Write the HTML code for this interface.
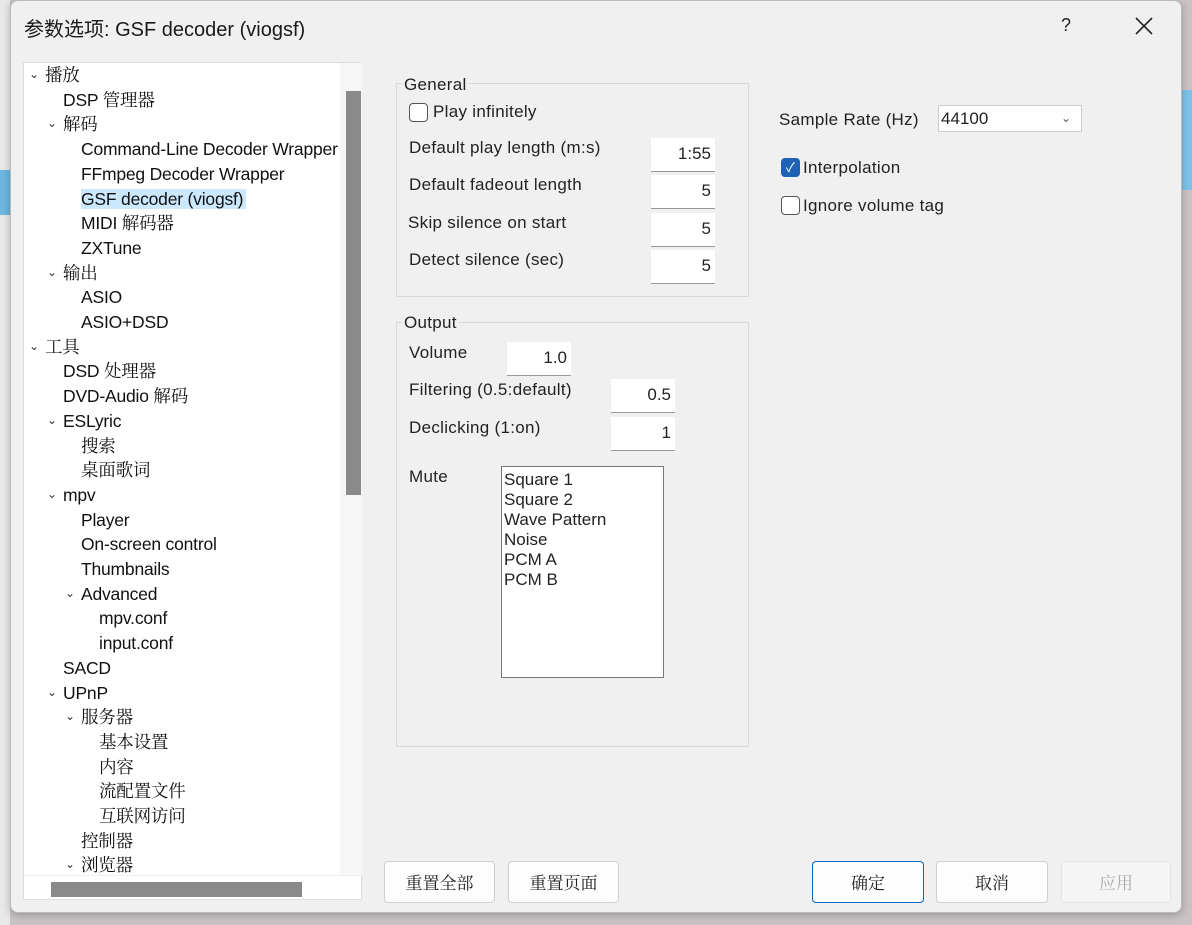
<!DOCTYPE html>
<html><head><meta charset="utf-8"><style>
*{box-sizing:border-box;margin:0;padding:0}
body{width:1192px;height:925px;overflow:hidden;background:#c9c3c6;font-family:"Liberation Sans","Noto Sans CJK SC",sans-serif;position:relative}
.a{position:absolute}
#win{left:10px;top:0;width:1172px;height:913px;background:#f0f0f0;border:1px solid #bbb;border-radius:8px;overflow:hidden;box-shadow:0 2px 8px rgba(0,0,0,.25)}
.title{left:13px;top:12px;font-size:20px;color:#1a1a1a}
.tree{left:12px;top:61px;width:339px;height:838px;background:#fff;border:1px solid #ddd}
.ti{position:absolute;font-size:17.5px;color:#111;white-space:nowrap;line-height:24px;height:24px;letter-spacing:-0.2px}
.cn{font-family:"Liberation Sans","Noto Serif CJK SC","Noto Serif CJK JP",serif}
.sel{background:#cce8ff;padding:0 3px;margin-left:-3px}
.chev{position:absolute;font-size:12px;color:#333}
.lbl{font-size:17px;color:#222;white-space:nowrap;letter-spacing:.3px}
.ed{background:#fff;border-bottom:1px solid #999;text-align:right;font-size:17px;padding-right:4px;line-height:32px;height:34px;color:#222}
.grp{border:1px solid #d8d8d8}
.btn{background:#fdfdfd;border:1px solid #d0d0d0;border-radius:4px;font-size:17px;text-align:center;line-height:40px;font-family:"Noto Serif CJK SC",serif;color:#222}
.cb{width:19px;height:19px;border:1px solid #555;border-radius:4px;background:#fff}
</style></head><body>
<div class="a" style="left:0;top:0;width:10px;height:925px;background:#e8e8e8"></div>
<div class="a" style="left:0;top:170px;width:10px;height:45px;background:#6cb6e0"></div>
<div class="a" style="left:1182px;top:90px;width:10px;height:100px;background:#7ec3e8"></div>
<div id="win" class="a">
<div class="a title">参数选项: GSF decoder (viogsf)</div>
<div class="a" style="left:1050px;top:14px;font-size:18px;color:#222">?</div>
<svg class="a" style="left:1124px;top:16px" width="18" height="18" viewBox="0 0 18 18"><path d="M1 1L17 17M17 1L1 17" stroke="#222" stroke-width="1.6"/></svg>
<div class="a tree">
<div class="a" style="left:316px;top:0;width:22px;height:812px;background:#f6f6f6"></div>
<div class="a" style="left:322px;top:28px;width:15px;height:404px;background:#8a8a8a"></div>
<div class="a" style="left:27px;top:819px;width:251px;height:15px;background:#8a8a8a"></div>
<div class="a" style="left:0;top:812px;width:338px;height:1px;background:#eee"></div>
</div>
<div id="items"></div>
<div class="a grp" style="left:385px;top:82px;width:353px;height:214px"></div>
<div class="a lbl" style="left:391px;top:74px;background:#f0f0f0;padding:0 2px">General</div>
<div class="a cb" style="left:398px;top:102px"></div>
<div class="a lbl" style="left:422px;top:101px">Play infinitely</div>
<div class="a lbl" style="left:398px;top:137px">Default play length (m:s)</div>
<div class="a ed" style="left:640px;top:137px;width:64px">1:55</div>
<div class="a lbl" style="left:398px;top:174px">Default fadeout length</div>
<div class="a ed" style="left:640px;top:174px;width:64px">5</div>
<div class="a lbl" style="left:397px;top:212px">Skip silence on start</div>
<div class="a ed" style="left:640px;top:212px;width:64px">5</div>
<div class="a lbl" style="left:398px;top:249px">Detect silence (sec)</div>
<div class="a ed" style="left:640px;top:249px;width:64px">5</div>
<div class="a grp" style="left:385px;top:321px;width:353px;height:425px"></div>
<div class="a lbl" style="left:391px;top:312px;background:#f0f0f0;padding:0 2px">Output</div>
<div class="a lbl" style="left:398px;top:342px">Volume</div>
<div class="a ed" style="left:496px;top:341px;width:64px">1.0</div>
<div class="a lbl" style="left:398px;top:379px">Filtering (0.5:default)</div>
<div class="a ed" style="left:600px;top:378px;width:64px">0.5</div>
<div class="a lbl" style="left:398px;top:417px">Declicking (1:on)</div>
<div class="a ed" style="left:600px;top:416px;width:64px">1</div>
<div class="a lbl" style="left:398px;top:466px">Mute</div>
<div class="a" style="left:490px;top:465px;width:163px;height:212px;background:#fff;border:1px solid #777;font-size:17px;line-height:20px;padding:3px 2px;color:#222">Square 1<br>Square 2<br>Wave Pattern<br>Noise<br>PCM A<br>PCM B</div>
<div class="a lbl" style="left:768px;top:109px">Sample Rate (Hz)</div>
<div class="a" style="left:927px;top:104px;width:144px;height:27px;background:#fff;border:1px solid #ccc;font-size:17px;line-height:25px;padding-left:2px;color:#222">44100<span style="position:absolute;right:10px;top:0;font-size:12px;color:#555">&#8964;</span></div>
<div class="a cb" style="left:770px;top:157px;background:#1e62b6;border-color:#1e62b6;color:#fff;font-size:13px;text-align:center;line-height:17px">✓</div>
<div class="a lbl" style="left:792px;top:157px">Interpolation</div>
<div class="a cb" style="left:770px;top:195px"></div>
<div class="a lbl" style="left:792px;top:195px">Ignore volume tag</div>
<div class="a btn" style="left:373px;top:860px;width:111px;height:42px">重置全部</div>
<div class="a btn" style="left:497px;top:860px;width:111px;height:42px">重置页面</div>
<div class="a btn" style="left:801px;top:860px;width:112px;height:42px;border:1px solid #0067c0">确定</div>
<div class="a btn" style="left:925px;top:860px;width:112px;height:42px">取消</div>
<div class="a btn" style="left:1050px;top:860px;width:110px;height:42px;background:#f5f5f5;color:#aaa;border-color:#e4e4e4">应用</div>
</div>
<script>
var d=[[0,'播放',1],[1,'DSP 管理器'],[1,'解码',1],[2,'Command-Line Decoder Wrapper'],[2,'FFmpeg Decoder Wrapper'],[2,'GSF decoder (viogsf)',0,1],[2,'MIDI 解码器'],[2,'ZXTune'],[1,'输出',1],[2,'ASIO'],[2,'ASIO+DSD'],[0,'工具',1],[1,'DSD 处理器'],[1,'DVD-Audio 解码'],[1,'ESLyric',1],[2,'搜索'],[2,'桌面歌词'],[1,'mpv',1],[2,'Player'],[2,'On-screen control'],[2,'Thumbnails'],[2,'Advanced',1],[3,'mpv.conf'],[3,'input.conf'],[1,'SACD'],[1,'UPnP',1],[2,'服务器',1],[3,'基本设置'],[3,'内容'],[3,'流配置文件'],[3,'互联网访问'],[2,'控制器'],[2,'浏览器',1]];
var h='';d.forEach(function(e,i){var y=62+i*24.7,x=34+e[0]*18;
if(e[2])h+='<div class="chev" style="left:'+(x-16)+'px;top:'+(y+4)+'px">&#8964;</div>';
h+='<div class="ti cn" style="left:'+x+'px;top:'+y+'px;width:'+(328-x)+'px;overflow:hidden"><span'+(e[3]?' class="sel"':'')+'>'+e[1]+'</span></div>';});
document.getElementById('items').innerHTML=h;
</script>
</body></html>
